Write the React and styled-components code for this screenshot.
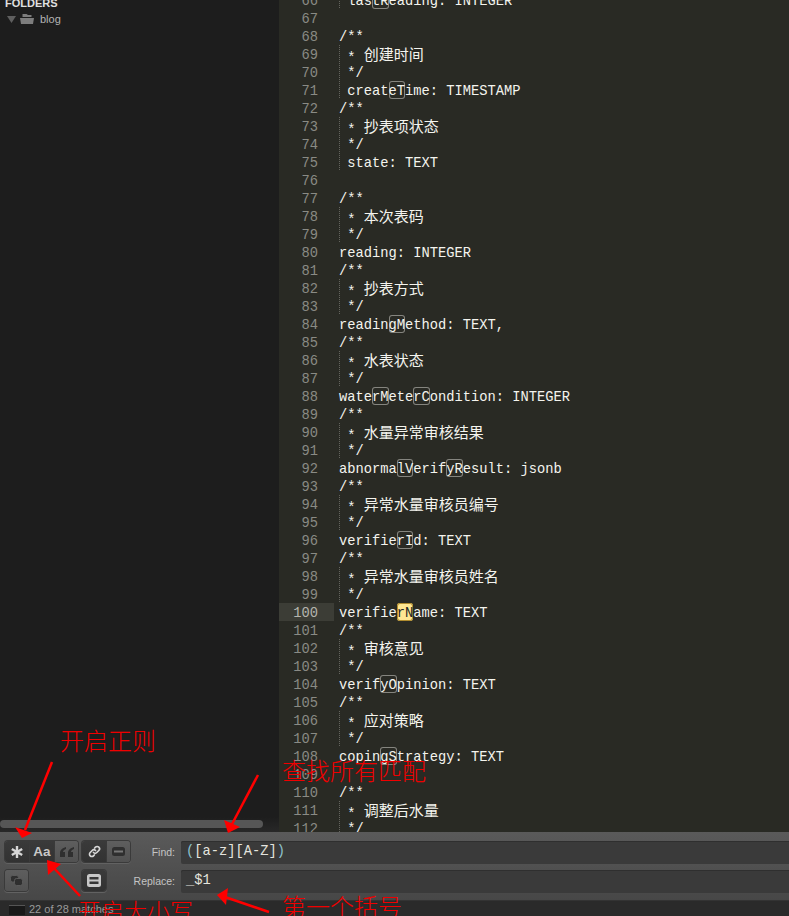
import React from "react";
import styled, { createGlobalStyle } from "styled-components";

const Global = createGlobalStyle`
  html, body { margin: 0; padding: 0; background: #1d1d1d; }
`;

const Page = styled.div`
  position: relative;
  width: 789px;
  height: 916px;
  overflow: hidden;
  display: flex;
  flex-direction: column;
  font-family: "Liberation Sans", Arial, sans-serif;
`;

const Main = styled.div`
  flex: none;
  height: 832px;
  display: flex;
  overflow: hidden;
`;

const Sidebar = styled.aside`
  flex: none;
  width: 279px;
  display: flex;
  flex-direction: column;
  background: #1d1d1d;
`;

const SideHeading = styled.div`
  margin-top: -5px;
  padding-left: 5px;
  height: 16px;
  line-height: 16px;
  font-size: 11px;
  font-weight: 700;
  color: #e0e0e0;
`;

const TreeRow = styled.div`
  display: flex;
  align-items: center;
  height: 16px;
  padding: 0 0 0 7px;
  gap: 4px;
  font-size: 11px;
  color: #b4b4b4;
`;

const FolderName = styled.span`
  margin-left: 2px;
`;

const SideSpacer = styled.div`
  flex: 1;
`;

const ScrollTrack = styled.div`
  height: 15px;
  padding-top: 3px;
  box-sizing: border-box;
  background: linear-gradient(#1d1d1d, #282828);
`;

const ScrollThumb = styled.div`
  width: 263px;
  height: 8px;
  border-radius: 4px;
  background: #565656;
`;

const Editor = styled.main`
  flex: 1;
  min-width: 0;
  overflow: hidden;
  background: #292a24;
`;

const Code = styled.div`
  margin-top: -9px;
`;

const Line = styled.div`
  display: flex;
  height: 18px;
  line-height: 18px;
  font-family: "Liberation Mono", monospace;
  font-size: 13.75px;
`;

const Gutter = styled.div`
  flex: none;
  width: 55px;
  box-sizing: border-box;
  padding: 2px 16px 0 0;
  text-align: right;
  color: ${(p) => (p.$active ? "#b5b5ae" : "#8a8b85")};
  background: ${(p) => (p.$active ? "#3c3d36" : "transparent")};
`;

const Source = styled.div`
  flex: 1;
  box-sizing: border-box;
  padding-top: 2px;
  margin-left: 5px;
  white-space: pre;
  color: #f4f4ee;
  background-image: ${(p) =>
    p.$guide
      ? "repeating-linear-gradient(to bottom, #64645e 0 1px, transparent 1px 2px)"
      : "none"};
  background-repeat: no-repeat;
  background-size: 1px 100%;
`;

const Cjk = styled.span`
  position: relative;
  top: -2px;
  font-family: "Noto Sans CJK SC", sans-serif;
  font-size: 15px;
  line-height: 18px;
`;

const Match = styled.span`
  display: inline-block;
  height: 18px;
  margin-top: -2px;
  line-height: 22px;
  vertical-align: top;
  border-radius: 3px;
  box-shadow: inset 0 0 0 1px ${(p) => (p.$selected ? "#b08c2e" : "#85857f")};
  background: ${(p) => (p.$selected ? "#ffe792" : "transparent")};
  color: ${(p) => (p.$selected ? "#272822" : "inherit")};
`;

const Panel = styled.section`
  flex: none;
  height: 69px;
  box-sizing: border-box;
  padding: 9px 0 0 5px;
  display: flex;
  flex-direction: column;
  gap: 6px;
  background: linear-gradient(#5a5a5a, #474747);
  border-bottom: 1px solid #333;
`;

const PanelRow = styled.div`
  display: grid;
  grid-template-columns: 77px 48px 51px 1fr;
  height: 23px;
  align-items: start;
`;

const Group = styled.div`
  display: flex;
  width: fit-content;
  height: 21px;
  border-radius: 3px;
  overflow: hidden;
  box-shadow: 0 0 0 1px #3a3a3a, 0 1px 0 1px #626262;
`;

const ToggleButton = styled.div`
  width: ${(p) => p.$w || 23}px;
  height: 21px;
  display: flex;
  align-items: center;
  justify-content: center;
  color: ${(p) => (p.$on ? "#d6d6d6" : "#2f2f2f")};
  background: ${(p) =>
    p.$on ? "linear-gradient(#3a3a3a, #323232)" : "linear-gradient(#5e5e5e, #525252)"};
  & + & {
    border-left: 1px solid #3a3a3a;
  }
`;

const CaseGlyph = styled.span`
  font-size: 13.5px;
  font-weight: 700;
  color: #c8c8c8;
`;

const Label = styled.span`
  height: 23px;
  line-height: 23px;
  font-size: 10.5px;
  text-align: right;
  padding-right: 6px;
  color: #c4c4c4;
`;

const Input = styled.div`
  height: 23px;
  line-height: 22px;
  padding-left: 5px;
  font-family: "Liberation Mono", monospace;
  font-size: 13.75px;
  color: #e4e4de;
  white-space: pre;
  background: #3a3a3a;
  box-shadow: inset 0 1px 0 #2f2f2f;
  border-radius: 2px 0 0 2px;
`;

const Paren = styled.span`
  color: #8fc3cf;
`;

const Status = styled.footer`
  flex: 1;
  display: flex;
  align-items: center;
  gap: 4px;
  padding-left: 9px;
  font-size: 11px;
  color: #9a9a9a;
  background: #2a2a2a;
`;

const StatusIcon = styled.span`
  width: 16px;
  height: 9px;
  margin-top: 2px;
  background: #191919;
  border-top: 1px solid #555;
`;

const Note = styled.div`
  position: absolute;
  left: ${(p) => p.$x}px;
  top: ${(p) => p.$y}px;
  font-family: "Noto Sans CJK SC", sans-serif;
  font-weight: 300;
  font-size: ${(p) => p.$size || 24}px;
  line-height: 28px;
  color: #f00000;
  white-space: nowrap;
`;

const ArrowLayer = styled.svg`
  position: absolute;
  left: 0;
  top: 0;
  pointer-events: none;
`;

const rows = [
  [66, " lastReading: INTEGER", 1],
  [67, ""],
  [68, "/**"],
  [69, " * 创建时间", 1],
  [70, " */", 1],
  [71, " createTime: TIMESTAMP", 1],
  [72, "/**"],
  [73, " * 抄表项状态", 1],
  [74, " */", 1],
  [75, " state: TEXT", 1],
  [76, ""],
  [77, "/**"],
  [78, " * 本次表码", 1],
  [79, " */", 1],
  [80, "reading: INTEGER"],
  [81, "/**"],
  [82, " * 抄表方式", 1],
  [83, " */", 1],
  [84, "readingMethod: TEXT,"],
  [85, "/**"],
  [86, " * 水表状态", 1],
  [87, " */", 1],
  [88, "waterMeterCondition: INTEGER"],
  [89, "/**"],
  [90, " * 水量异常审核结果", 1],
  [91, " */", 1],
  [92, "abnormalVerifyResult: jsonb"],
  [93, "/**"],
  [94, " * 异常水量审核员编号", 1],
  [95, " */", 1],
  [96, "verifierId: TEXT"],
  [97, "/**"],
  [98, " * 异常水量审核员姓名", 1],
  [99, " */", 1],
  [100, "verifierName: TEXT"],
  [101, "/**"],
  [102, " * 审核意见", 1],
  [103, " */", 1],
  [104, "verifyOpinion: TEXT"],
  [105, "/**"],
  [106, " * 应对策略", 1],
  [107, " */", 1],
  [108, "copingStrategy: TEXT"],
  [109, ""],
  [110, "/**"],
  [111, " * 调整后水量", 1],
  [112, " */", 1],
];

function renderSource(text, selected) {
  return text.split(/([\u4e00-\u9fff]+|[a-z][A-Z])/).map((part, i) => {
    if (/^[\u4e00-\u9fff]/.test(part)) return <Cjk key={i}>{part}</Cjk>;
    if (/^[a-z][A-Z]$/.test(part)) return <Match key={i} $selected={selected}>{part}</Match>;
    return part;
  });
}

const arrows = [
  [52, 762, 25, 830],
  [258, 775, 231, 826],
  [80, 896, 52, 866],
  [269, 912, 225, 897],
];

const heads = [
  "22,838 15,827 32,833",
  "228,833 224,820 240,827",
  "47,860 48,875 61,864",
  "217,895 228,888 226,905",
];

export default function App() {
  return (
    <Page>
      <Global />
      <Main>
        <Sidebar>
          <SideHeading>FOLDERS</SideHeading>
          <TreeRow>
            <svg width="9" height="9" viewBox="0 0 9 9"><path d="M0 1h9L4.500 8z" fill="#5f5f5f" /></svg>
            <svg width="14" height="10" viewBox="0 0 14 10">
              <path d="M2.500 0h4L8 1h3.500v2h-9zM0 4h14l-1 6H1z" fill="#7d7d7d" />
            </svg>
            <FolderName>blog</FolderName>
          </TreeRow>
          <SideSpacer />
          <ScrollTrack><ScrollThumb /></ScrollTrack>
        </Sidebar>
        <Editor>
          <Code>
            {rows.map(([n, text, guide]) => (
              <Line key={n}>
                <Gutter $active={n === 100}>{n}</Gutter>
                <Source $guide={guide}>{renderSource(text, n === 100)}</Source>
              </Line>
            ))}
          </Code>
        </Editor>
      </Main>
      <Panel>
        <PanelRow>
          <Group>
            <ToggleButton $on $w={24}>
              <svg width="12" height="12" viewBox="0 0 12 12" stroke="currentColor" strokeWidth="2.400">
                <path d="M6 0v12M.8 3l10.400 6M.8 9l10.400-6" />
              </svg>
            </ToggleButton>
            <ToggleButton $on $w={24}><CaseGlyph>Aa</CaseGlyph></ToggleButton>
            <ToggleButton>
              <svg width="14" height="10" viewBox="0 0 14 10" fill="currentColor">
                <path d="M6 0C2.500 1 0 3 0 6v4h5V5H3c0-1.500 1.500-2.500 3-3zM14 0c-3.500 1-6 3-6 6v4h5V5h-2c0-1.500 1.500-2.500 3-3z" />
              </svg>
            </ToggleButton>
          </Group>
          <Group>
            <ToggleButton $on $w={24}>
              <svg width="13" height="13" viewBox="0 0 13 13" fill="none" stroke="currentColor" strokeWidth="1.700" strokeLinecap="round">
                <path d="M5.500 7.500c1 1 2.500.8 3.300 0l2-2a2.300 2.300 0 0 0-3.300-3.300l-.8.800M7.500 5.500c-1-1-2.500-.8-3.300 0l-2 2a2.300 2.300 0 0 0 3.300 3.300l.8-.8" />
              </svg>
            </ToggleButton>
            <ToggleButton>
              <svg width="13" height="9" viewBox="0 0 13 9">
                <rect x="0" y="0" width="13" height="9" rx="2.500" fill="#2f2f2f" />
                <rect x="2" y="3.500" width="9" height="2" fill="#777" />
              </svg>
            </ToggleButton>
          </Group>
          <Label>Find:</Label>
          <Input>
            <Paren>(</Paren>[a-z][A-Z]<Paren>)</Paren>
          </Input>
        </PanelRow>
        <PanelRow>
          <Group>
            <ToggleButton>
              <svg width="13" height="11" viewBox="0 0 13 11" fill="#2f2f2f" stroke="#5a5a5a" strokeWidth="1">
                <rect x="0.500" y="0.500" width="8" height="6.500" rx="2" />
                <rect x="4.500" y="3.500" width="8" height="7" rx="2" />
              </svg>
            </ToggleButton>
          </Group>
          <Group>
            <ToggleButton $on $w={24}>
              <svg width="14" height="13" viewBox="0 0 14 13" fill="#c8c8c8">
                <path d="M2.500 0h9A2.500 2.500 0 0 1 14 2.500v8a2.500 2.500 0 0 1-2.500 2.500h-9A2.500 2.500 0 0 1 0 10.500v-8A2.500 2.500 0 0 1 2.500 0zM2.500 3v2.500h9V3zm0 4.500V10h9V7.500z" fillRule="evenodd" />
              </svg>
            </ToggleButton>
          </Group>
          <Label>Replace:</Label>
          <Input>_$1</Input>
        </PanelRow>
      </Panel>
      <Status>
        <StatusIcon />
        22 of 28 matches
      </Status>
      <ArrowLayer width="789" height="916" viewBox="0 0 789 916">
        {arrows.map(([x1, y1, x2, y2], i) => (
          <React.Fragment key={i}>
            <line x1={x1} y1={y1} x2={x2} y2={y2} stroke="#f00" strokeWidth="2.500" />
            <polygon points={heads[i]} fill="#f00" />
          </React.Fragment>
        ))}
      </ArrowLayer>
      <Note $x={60} $y={726}>开启正则</Note>
      <Note $x={282} $y={756}>查找所有匹配</Note>
      <Note $x={78} $y={896} $size={23}>开启大小写</Note>
      <Note $x={282} $y={892}>第一个括号</Note>
    </Page>
  );
}
